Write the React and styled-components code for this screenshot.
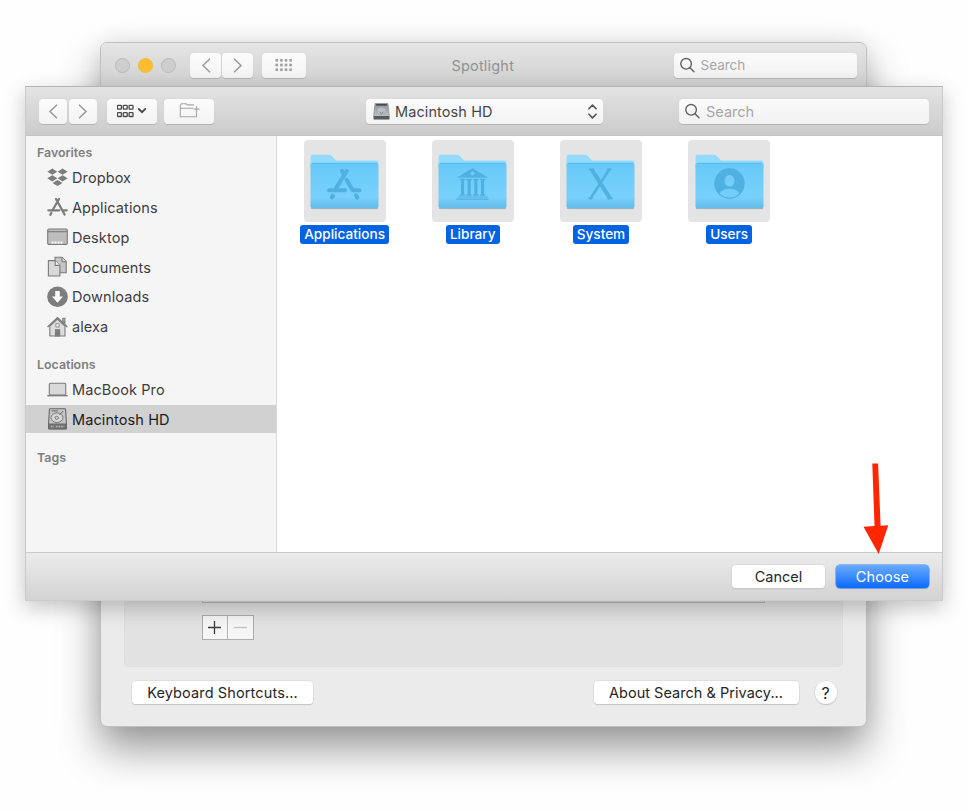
import React from 'react'
import styled, { createGlobalStyle } from 'styled-components'

const GlobalStyle = createGlobalStyle`
  *, *::before, *::after {
    box-sizing: border-box;
  }
  body {
    margin: 0;
    background: #fefefe;
    overflow: hidden;
  }
  button, input {
    font: inherit;
    letter-spacing: inherit;
  }
`

const Desktop = styled.main`
  position: relative;
  width: 968px;
  height: 811px;
  overflow: hidden;
  font-family: 'Inter', 'Liberation Sans', sans-serif;
  font-size: 14.5px;
  color: #262626;
`

/* ---------- windows ---------- */

const PrefsWindow = styled.section`
  position: absolute;
  left: 100px;
  top: 42px;
  width: 767px;
  height: 685px;
  display: flex;
  flex-direction: column;
  border: 1px solid #c0c0c0;
  border-radius: 7px;
  background: #ebebeb;
  background-clip: padding-box;
  box-shadow: 0 22px 42px rgba(0, 0, 0, 0.4), 0 0 24px rgba(0, 0, 0, 0.07);
`

const Sheet = styled.section`
  position: absolute;
  left: 25px;
  top: 86px;
  width: 918px;
  height: 515px;
  display: flex;
  flex-direction: column;
  border: 1px solid #cbcbcb;
  border-top-color: #b4b4b4;
  background: #fff;
  box-shadow: 0 7px 20px rgba(0, 0, 0, 0.23);
`

const PrefsBar = styled.header`
  display: flex;
  align-items: center;
  height: 49px;
  padding: 0 9px 5px 14px;
  border-radius: 6px 6px 0 0;
  background: linear-gradient(#e5e5e5, #cdcdcd);
`

const SheetBar = styled.header`
  display: flex;
  align-items: center;
  height: 49px;
  flex: none;
  padding: 0 13px;
  border-bottom: 1px solid #c4c4c4;
  background: linear-gradient(#e3e3e3, #cbcbcb);
`

const Title = styled.h1`
  flex: 1;
  margin: 0;
  padding-right: 14px;
  text-align: center;
  font-size: 14.5px;
  font-weight: 400;
  letter-spacing: 0.2px;
  color: #929292;
`

const Lights = styled.div`
  display: flex;
  gap: 8px;
  margin-right: 14px;
`

const Light = styled.span`
  width: 15px;
  height: 15px;
  border-radius: 50%;
  border: 1px solid ${props => (props.$on ? '#f7bb35' : '#bababa')};
  background: ${props => (props.$on ? '#fdbd2e' : '#cecece')};
`

/* ---------- controls ---------- */

const ToolButton = styled.button`
  display: flex;
  align-items: center;
  justify-content: center;
  width: ${props => props.$width}px;
  height: 25px;
  margin-right: ${props => props.$gap || 0}px;
  padding: 0;
  border: 0;
  border-radius: 4px;
  background: linear-gradient(#fcfcfc, #f3f3f3);
  box-shadow: 0 1px 0.5px #b4b4b4, 0 0 1px #c2c2c2;
`

const SearchBox = styled.label`
  display: flex;
  align-items: center;
  gap: 6px;
  width: ${props => props.$width}px;
  height: 25px;
  padding-left: 6px;
  border-radius: 4px;
  background: linear-gradient(#fbfbfb, #f1f1f1);
  box-shadow: 0 1px 0.5px #b4b4b4, 0 0 1px #c2c2c2;
  font-size: ${props => props.$size}px;
  color: #a6a6a6;
`

const PathPopup = styled.button`
  display: flex;
  align-items: center;
  width: 237px;
  height: 25px;
  margin: 0 76px 0 auto;
  padding: 0 6px 0 7px;
  border: 0;
  border-radius: 4px;
  background: linear-gradient(#fcfcfc, #f3f3f3);
  box-shadow: 0 1px 0.5px #b4b4b4, 0 0 1px #c2c2c2;
  color: #474747;
  letter-spacing: 0.1px;

  span {
    flex: 1;
    padding-left: 5px;
    text-align: left;
  }
`

const PushButton = styled.button`
  width: ${props => props.$width}px;
  height: 22.5px;
  padding: 0;
  border: 0;
  border-radius: 4px;
  background: ${props => (props.$primary ? 'linear-gradient(#6aabff, #0a6bff)' : '#fff')};
  color: ${props => (props.$primary ? '#fff' : '#262626')};
  box-shadow: 0 0 0 0.5px ${props => (props.$primary ? '#3d86f5' : '#d2d2d2')}, 0 1px 1px #bababa;
  letter-spacing: ${props => props.$track || 0}px;
  line-height: 22px;
  white-space: nowrap;
`

const HelpButton = styled(PushButton)`
  border-radius: 50%;
  font-size: 16px;
`

/* ---------- preferences body ---------- */

const PrefsBody = styled.div`
  flex: 1;
  display: flex;
  flex-direction: column;
  padding: 0 23px 22px 23px;
`

const Pane = styled.div`
  flex: 1;
  display: flex;
  flex-direction: column;
  padding: 0 77px 26px 76.5px;
  border: 1px solid #dedede;
  border-top: 0;
  border-radius: 0 0 5px 5px;
  background: #e2e2e2;
`

const ListBox = styled.div`
  flex: 1;
  border: 1px solid #b8b8b8;
  background: #dedede;
`

const Stepper = styled.div`
  display: flex;
  align-self: flex-start;
  width: 52px;
  height: 25px;
  margin-top: 12px;
  border: 1px solid #adadad;
  background: #f6f6f6;
`

const StepButton = styled.button`
  flex: 1;
  display: flex;
  align-items: center;
  justify-content: center;
  padding: 0;
  border: 0;
  background: transparent;

  & + & {
    border-left: 1px solid #b5b5b5;
  }
`

const PrefsActions = styled.div`
  display: flex;
  align-items: center;
  height: 23px;
  margin-top: 14px;
  padding: 0 6.5px 0 8px;
  gap: 16px;

  > :first-child {
    margin-right: auto;
  }
`

/* ---------- sheet body ---------- */

const SheetBody = styled.div`
  flex: 1;
  display: flex;
  min-height: 0;
`

const Sidebar = styled.nav`
  width: 251px;
  flex: none;
  padding-top: 7px;
  border-right: 1px solid #d9d9d9;
  background: #f5f5f5;
`

const Group = styled.h2`
  height: 20.7px;
  margin: ${props => props.$space || 0}px 0 0;
  padding-left: 11px;
  font-size: 12.4px;
  line-height: 20px;
  font-weight: 600;
  color: #808080;
`

const Place = styled.a`
  display: flex;
  align-items: center;
  gap: 4px;
  height: 28px;
  margin-bottom: 1.8px;
  padding-left: 21px;
  letter-spacing: 0.1px;
  background: ${props => (props.$active ? '#d1d1d1' : 'transparent')};
  color: ${props => (props.$active ? '#202020' : '#3e3e3e')};
`

const Files = styled.div`
  flex: 1;
  display: grid;
  grid-template-columns: repeat(4, 128.2px);
  align-content: start;
  padding: 4px 0 0 3.5px;
`

const FileItem = styled.figure`
  display: flex;
  flex-direction: column;
  align-items: center;
  gap: 3px;
  margin: 0;
`

const Thumb = styled.div`
  display: flex;
  align-items: center;
  justify-content: center;
  width: 82px;
  height: 82px;
  padding-top: 1px;
  border-radius: 4px;
  background: #e4e4e4;
`

const FileName = styled.figcaption`
  height: 19px;
  padding: 0 4px;
  border-radius: 3px;
  background: #0463e0;
  color: #fff;
  font-size: 13.6px;
  font-weight: 500;
  line-height: 19px;
`

const SheetFooter = styled.footer`
  display: flex;
  align-items: center;
  justify-content: flex-end;
  gap: 11px;
  height: 48px;
  flex: none;
  padding-right: 13px;
  border-top: 1px solid #cacaca;
  background: linear-gradient(#ebebeb, #d3d3d3);
`

const Arrow = styled.svg`
  position: absolute;
  left: 860px;
  top: 460px;
`

/* ---------- icons ---------- */

const Chevron = ({ flip }) => (
  <svg width="10" height="15" viewBox="0 0 10 15" fill="none" stroke="#9d9d9d" strokeWidth="1.6" strokeLinecap="round">
    <path d={flip ? 'M1.5 1.2 8 7.5 1.5 13.8' : 'M8.5 1.2 2 7.5 8.5 13.8'} />
  </svg>
)

const Magnifier = () => (
  <svg width="15" height="16" viewBox="0 0 15 16" fill="none" stroke="#626262" strokeWidth="1.4" strokeLinecap="round">
    <circle cx="6.1" cy="6.8" r="5.3" />
    <path d="m10 10.8 4 4" />
  </svg>
)

const DotGrid = () => (
  <svg width="18" height="13" viewBox="0 0 18 13" fill="#a0a0a0">
    {[0, 4.7, 9.4].map(y => [0.5, 5.1, 9.7, 14.3].map(x => <rect key={`${x}-${y}`} x={x} y={y} width="2.6" height="2.6" />))}
  </svg>
)

const ViewIcon = () => (
  <svg width="30" height="14" viewBox="0.7 0 30 14" fill="none" stroke="#4b4b4b">
    {[1.3, 8.6].map(y => [1.2, 7, 12.8].map(x => <rect key={`${x}-${y}`} x={x} y={y} width="3.9" height="3.9" rx="0.6" strokeWidth="1.3" />))}
    <path d="m22.5 5 3.2 3.2L28.9 5" strokeWidth="1.8" strokeLinecap="round" />
  </svg>
)

const NewFolder = () => (
  <svg width="21" height="16" viewBox="0 0 21 16" fill="none" stroke="#a8a8a8" strokeWidth="1.1">
    <path d="M15 1.9H8.2L7 .8H2.2L1.3 2v11.8h16.2V9.2M1.3 5.2h13" />
    <path d="M17.5 3.2v6M14.5 6.2h6" strokeWidth="1.3" />
  </svg>
)

const PopupArrows = () => (
  <svg width="9" height="15" viewBox="0 0 9 15" fill="none" stroke="#555" strokeWidth="1.6" strokeLinecap="round" strokeLinejoin="round">
    <path d="m.9 4.8 3.6-3.7 3.6 3.7M.9 10.2l3.6 3.7 3.6-3.7" />
  </svg>
)

const DiskColor = () => (
  <svg width="17" height="17" viewBox="0 0 17 17">
    <defs>
      <linearGradient id="disk" x1="0" y1="0" x2="0" y2="1">
        <stop offset="0" stopColor="#8e9698" />
        <stop offset="1" stopColor="#c5cbcc" />
      </linearGradient>
    </defs>
    <path d="M2 .5h13l1.3 12V16H.7v-3.5z" fill="url(#disk)" stroke="#7d8486" strokeWidth=".6" />
    <path d="M.8 13h15.4v3.4H.8z" fill="#565b5c" />
    <path d="M3.2 1.1h10.6v1.5H3.2z" fill="#3a4144" />
    <ellipse cx="8.5" cy="8" rx="4.5" ry="3.7" fill="#b8c0c2" stroke="#969e9f" strokeWidth=".6" />
    <path d="m6.5 9 2 1.5 2-1.5" stroke="#6f7778" strokeWidth=".9" fill="none" />
  </svg>
)

const Glyph = props => <svg width="21" height="22" viewBox="0 0 21 22" fill="none" stroke="#7b7b7b" strokeWidth="1.1" {...props} />

const DropboxIcon = () => (
  <Glyph fill="#7d7d7d" stroke="none">
    <path d="m5.3 1.6 5 3.1-5 3.1-5-3.1zM15.6 1.6l5 3.1-5 3.1-5-3.1zM5.3 8.2l5 3.1-5 3.1-5-3.1zM15.6 8.2l5 3.1-5 3.1-5-3.1zM10.5 12.9l5 3-5 3-5-3z" />
  </Glyph>
)

const AppsIcon = () => (
  <Glyph stroke="#7d7d7d" strokeWidth="2.3" strokeLinecap="round">
    <path d="M12 3 6.2 13M9 3l8.6 15.5M1.4 14.3h10.8M16.5 14.3h3.2M4.3 17l-1 1.8" />
  </Glyph>
)

const DesktopIcon = () => (
  <Glyph>
    <rect x=".7" y="3" width="19.6" height="15.4" rx="1.2" fill="#bdbdbd" />
    <path d="M1 5.7h19" />
    <path d="M4.5 16.7h12" stroke="#f7f7f7" strokeWidth="2.2" strokeDasharray="2 1" />
  </Glyph>
)

const DocsIcon = () => (
  <Glyph fill="#d8d8d8">
    <path d="M8 1.2h7l4.2 4.2v11.3H8z" fill="#c5c5c5" />
    <path d="M15 1.2v4.5h4.2" />
    <path d="M1.4 4.6h6.8l4.7 4.8v10.6H1.4z" />
    <path d="M8.2 4.6v4.8h4.7" fill="#f5f5f5" />
  </Glyph>
)

const DownloadIcon = () => (
  <Glyph stroke="none">
    <circle cx="10.5" cy="10.8" r="10.3" fill="#7d7d7d" />
    <path d="M8.2 5h4.6v5.6h3.3l-5.6 6.2-5.6-6.2h3.3z" fill="#fafafa" />
  </Glyph>
)

const HomeIcon = () => (
  <Glyph>
    <path d="M15.8 2.2h2.1v4.6l-2.1-1.6z" fill="#bbb" />
    <path d="M2.8 10v10h15.2V10l-7.6-7z" fill="#dcdcdc" />
    <path d="m.6 11 9.9-9.2 9.9 9.2" strokeWidth="1.4" />
    <path d="M8.5 13.8h4.2V20H8.5z" fill="#7b7b7b" />
    <rect x="8.9" y="7.8" width="3.2" height="3.2" fill="#f5f5f5" strokeWidth=".8" />
  </Glyph>
)

const LaptopIcon = () => (
  <Glyph>
    <rect x="2.3" y="4.3" width="16.4" height="11.7" rx="1" fill="#d9d9d9" />
    <path d="M.3 16.7h20.4" strokeWidth="1.3" />
  </Glyph>
)

const DiskIcon = () => (
  <Glyph stroke="#666">
    <path d="M3.4.8h14.2q.9 0 1 .9l.8 13.8v4.3q0 1.2-1 1.2H2.6q-1 0-1-1.2v-4.3l.8-13.8q0-.9 1-.9z" fill="#c6c6c6" />
    <path d="M1.7 16h17.6v4.7H1.7z" fill="#777" />
    <ellipse cx="10" cy="9.7" rx="6" ry="4.8" fill="#d6d6d6" strokeWidth=".8" />
    <circle cx="9.7" cy="9.8" r="1.6" strokeWidth=".8" />
    <path d="M4.5 2.9h6.5M16.2 3l-3.6 3.8" strokeWidth="1" />
    <path d="M4 18.4h3M9 18.4h8" stroke="#b5b5b5" strokeWidth="1.5" strokeDasharray="1.6 1" />
  </Glyph>
)

const emblems = {
  Applications: (
    <g stroke="#50b0e1" strokeWidth="4.1" strokeLinecap="round" fill="none">
      <path d="M36.8 17 25.8 34.7M32 17l2.2 3.6M36.6 26l6.2 10.2M19.2 36.2h15.7M43.3 36.2h6.2M22.8 41.7l-.9 1.7M46 41.4l1.3 2.2" />
    </g>
  ),
  Library: (
    <g fill="#50b0e1">
      <path fillRule="evenodd" d="M34.5 14.2 50 23.4H19zM34.5 17.4a2 2 0 1 0 0 4 2 2 0 0 0 0-4z" />
      <path d="M21.7 24.7h5.6v1.6h-1.2v14h1.2v1.5h-5.6v-1.5H23v-14h-1.3zM28.4 24.7h5.4v1.6h-1.1v14h1.1v1.5h-5.4v-1.5h1.2v-14h-1.2zM35.1 24.7h5.4v1.6h-1.1v14h1.1v1.5h-5.4v-1.5h1.2v-14h-1.2zM41.8 24.7h5.6v1.6h-1.3v14h1.3v1.5h-5.6v-1.5H43v-14h-1.2zM19.5 42.6h30v1h-30zM18.5 44.5h32v1.2h-32z" />
    </g>
  ),
  System: (
    <g stroke="#50b0e1" fill="none">
      <path d="M22.8 15.2h5.2M41.2 15.2h4.3M22.3 44.4h4.4M41.4 44.4h5.4" strokeWidth="1.6" />
      <path d="m25.4 15 18.8 29.6" strokeWidth="4" />
      <path d="M43.6 15 24.4 44.6" strokeWidth="2.6" />
    </g>
  ),
  Users: (
    <g>
      <circle cx="34.5" cy="29.5" r="15.2" fill="#50b0e1" />
      <ellipse cx="34.5" cy="26.8" rx="5.1" ry="5.9" fill="#72cdf9" />
      <path d="M24.4 39.3q3.5-4.6 10.1-4.6t10.1 4.6q-3.7 4.2-10.1 4.2t-10.1-4.2z" fill="#72cdf9" />
    </g>
  ),
}

const Folder = ({ name }) => (
  <svg width="69" height="56" viewBox="0 0 69 56">
    <defs>
      <linearGradient id="folder" x1="0" y1="0" x2="0" y2="1">
        <stop offset="0" stopColor="#67c9f8" />
        <stop offset=".75" stopColor="#78d1fc" />
        <stop offset="1" stopColor="#63bce8" />
      </linearGradient>
    </defs>
    <path d="M1 54.6h67" stroke="#a5aeb3" strokeWidth="1" />
    <path d="M.5 11V3.2Q.5.8 2.8.8h16.3q1.7 0 2.8 1.2l3 3.3q1 1.2 2.6 1.2h38.7q2.3 0 2.3 2.3V14H.5z" fill="#92dbff" />
    <path d="M.5 11Q.5 9 2.5 9h64q2 0 2 2v41.5q0 1.8-1.8 1.8H2.3q-1.8 0-1.8-1.8z" fill="url(#folder)" />
    <path d="M2 9.3h65" stroke="#52b7e9" strokeWidth=".8" />
    {emblems[name]}
  </svg>
)

const favorites = [
  ['Dropbox', DropboxIcon],
  ['Applications', AppsIcon],
  ['Desktop', DesktopIcon],
  ['Documents', DocsIcon],
  ['Downloads', DownloadIcon],
  ['alexa', HomeIcon],
]

const locations = [
  ['MacBook Pro', LaptopIcon],
  ['Macintosh HD', DiskIcon],
]

const folders = ['Applications', 'Library', 'System', 'Users']

const Spotlight = () => (
  <PrefsWindow>
    <PrefsBar>
      <Lights>
        <Light />
        <Light $on />
        <Light />
      </Lights>
      <ToolButton $width={31} $gap={1}><Chevron /></ToolButton>
      <ToolButton $width={31} $gap={9}><Chevron flip /></ToolButton>
      <ToolButton $width={44}><DotGrid /></ToolButton>
      <Title>Spotlight</Title>
      <SearchBox $width={183.5} $size={13.5}><Magnifier />Search</SearchBox>
    </PrefsBar>
    <PrefsBody>
      <Pane>
        <ListBox />
        <Stepper>
          <StepButton>
            <svg width="13" height="13" stroke="#3c3c3c" strokeWidth="1.3"><path d="M0 6.5h13M6.5 0v13" /></svg>
          </StepButton>
          <StepButton>
            <svg width="13" height="13" stroke="#c2c2c2" strokeWidth="1.3"><path d="M0 6.5h13" /></svg>
          </StepButton>
        </Stepper>
      </Pane>
      <PrefsActions>
        <PushButton $width={181} $track={0.12}>Keyboard Shortcuts...</PushButton>
        <PushButton $width={205} $track={0.03}>About Search &amp; Privacy...</PushButton>
        <HelpButton $width={22}>?</HelpButton>
      </PrefsActions>
    </PrefsBody>
  </PrefsWindow>
)

const OpenSheet = () => (
  <Sheet>
    <SheetBar>
      <ToolButton $width={28} $gap={2}><Chevron /></ToolButton>
      <ToolButton $width={28} $gap={10}><Chevron flip /></ToolButton>
      <ToolButton $width={50} $gap={7}><ViewIcon /></ToolButton>
      <ToolButton $width={50}><NewFolder /></ToolButton>
      <PathPopup>
        <DiskColor />
        <span>Macintosh HD</span>
        <PopupArrows />
      </PathPopup>
      <SearchBox $width={250} $size={14.5}><Magnifier />Search</SearchBox>
    </SheetBar>
    <SheetBody>
      <Sidebar>
        <Group>Favorites</Group>
        {favorites.map(([name, Icon]) => <Place key={name}><Icon />{name}</Place>)}
        <Group $space={14.3}>Locations</Group>
        {locations.map(([name, Icon]) => (
          <Place key={name} $active={name === 'Macintosh HD'}><Icon />{name}</Place>
        ))}
        <Group $space={14.3}>Tags</Group>
      </Sidebar>
      <Files>
        {folders.map(name => (
          <FileItem key={name}>
            <Thumb><Folder name={name} /></Thumb>
            <FileName>{name}</FileName>
          </FileItem>
        ))}
      </Files>
    </SheetBody>
    <SheetFooter>
      <PushButton $width={93}>Cancel</PushButton>
      <PushButton $width={93} $track={0.1} $primary>Choose</PushButton>
    </SheetFooter>
  </Sheet>
)

const App = () => {
  return (
    <Desktop>
      <GlobalStyle />
      <Spotlight />
      <OpenSheet />
      <Arrow width="36" height="96" viewBox="0 0 36 96" fill="#ff2600">
        <path d="M12.3 3.5h5.8l2.5 62.2 7.7-.4L18.7 94 3.5 66.8l11-.7z" />
      </Arrow>
    </Desktop>
  )
}

export default App
